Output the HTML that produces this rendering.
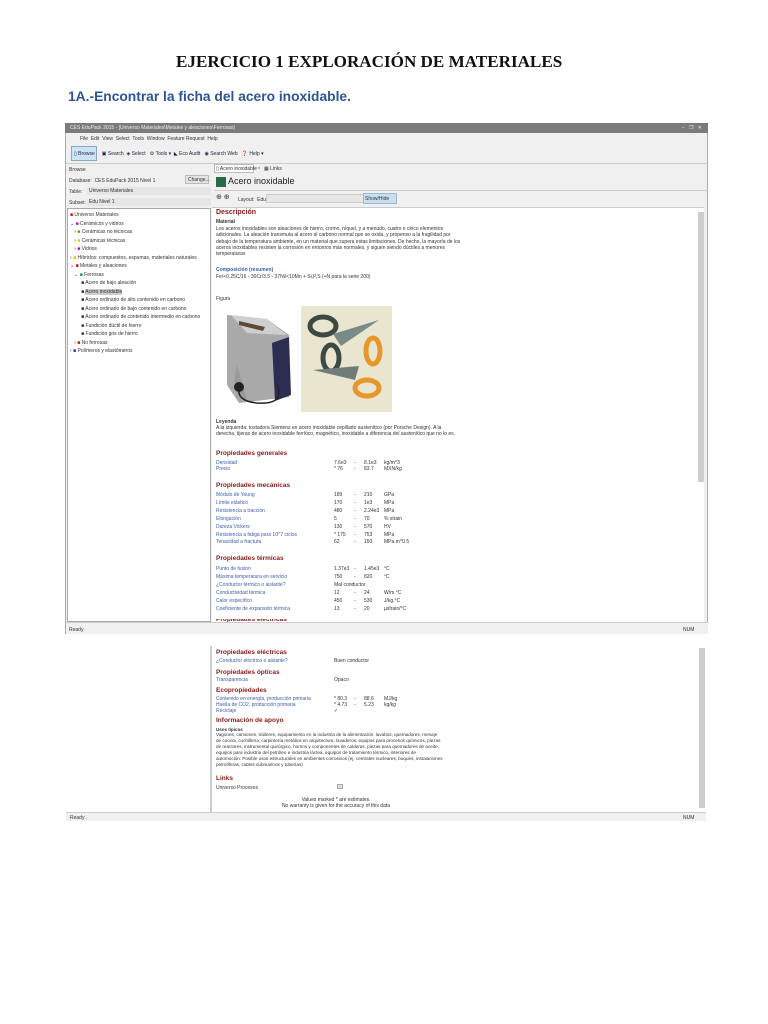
<!DOCTYPE html>
<html><head><meta charset="utf-8"><style>
*{margin:0;padding:0;box-sizing:border-box}
body{width:768px;height:1024px;background:#fff;position:relative;overflow:hidden;font-family:"Liberation Sans",sans-serif;color:#333}
.a{position:absolute}
.t{font-size:5px;line-height:6px;white-space:nowrap}
.h{color:#8b1a1a;font-weight:bold;font-size:6.5px}
.l{color:#3b5ea8}
</style></head><body>
<div class="a" style="left:176px;top:52px;font-family:'Liberation Serif',serif;font-weight:bold;font-size:17.1px;color:#111">EJERCICIO 1 EXPLORACIÓN DE MATERIALES</div>
<div class="a" style="left:68px;top:89px;font-weight:bold;font-size:13.8px;color:#2e5597">1A.-Encontrar la ficha del acero inoxidable.</div>

<!-- window 1 -->
<div class="a" style="left:65px;top:123px;width:643px;height:511px;background:#f0f0f0;border:1px solid #aaa"></div>
<div class="a" style="left:65px;top:123px;width:643px;height:10px;background:#7b7b7b"></div>
<div class="a t" style="left:70px;top:125px;color:#eee">CES EduPack 2015 - [Universo Materiales\Metales y aleaciones\Ferrosas]</div>
<div class="a t" style="left:682px;top:125px;color:#eee">–&nbsp;&nbsp;&nbsp;❐&nbsp;&nbsp;&nbsp;✕</div>
<div class="a t" style="left:80px;top:136px">File&nbsp; Edit&nbsp; View&nbsp; Select&nbsp; Tools&nbsp; Window&nbsp; Feature Request&nbsp; Help</div>
<div class="a" style="left:71px;top:146px;width:26px;height:15px;background:#cde4f7;border:1px solid #8ab"></div>
<div class="a t" style="left:74px;top:151px;color:#224">▯ Browse&nbsp;&nbsp;&nbsp;&nbsp; ▣ Search&nbsp; ◈ Select&nbsp;&nbsp; ⚙ Tools ▾&nbsp; ◣ Eco Audit&nbsp;&nbsp; ◉ Search Web&nbsp;&nbsp; ❓ Help ▾</div>
<div class="a" style="left:66px;top:163px;width:642px;height:1px;background:#ccc"></div>
<!-- left pane -->
<div class="a t" style="left:69px;top:167px">Browse</div>
<div class="a t" style="left:69px;top:178px">Database:&nbsp; CES EduPack 2015 Nivel 1</div>
<div class="a" style="left:185px;top:175px;width:24px;height:9px;background:#e4e4e4;border:1px solid #bbb"></div>
<div class="a t" style="left:188px;top:177px">Change...</div>
<div class="a t" style="left:69px;top:189px">Table:</div>
<div class="a" style="left:87px;top:187px;width:124px;height:8px;background:#e6e6e6"></div>
<div class="a t" style="left:89px;top:188px">Universo Materiales</div>
<div class="a t" style="left:69px;top:200px">Subset:</div>
<div class="a" style="left:87px;top:198px;width:124px;height:8px;background:#e6e6e6"></div>
<div class="a t" style="left:89px;top:199px">Edu Nivel 1</div>
<div class="a" style="left:67px;top:208px;width:144px;height:414px;background:#fff;border:1px solid #aaa"></div>
<div class="a t" style="left:70px;top:211px;line-height:8.5px;color:#333">
<span style="color:#c00">■</span> Universo Materiales<br>
⌄ <span style="color:#c0c">■</span> Cerámicos y vidrios<br>
&nbsp;&nbsp;&nbsp;› <span style="color:#880">■</span> Cerámicas no técnicas<br>
&nbsp;&nbsp;&nbsp;› <span style="color:#dc0">■</span> Cerámicas técnicas<br>
&nbsp;&nbsp;&nbsp;› <span style="color:#c0c">■</span> Vidrios<br>
› <span style="color:#dc0">■</span> Híbridos: compuestos, espumas, materiales naturales<br>
⌄ <span style="color:#c00">■</span> Metales y aleaciones<br>
&nbsp;&nbsp;&nbsp;⌄ <span style="color:#088">■</span> Ferrosas<br>
&nbsp;&nbsp;&nbsp;&nbsp;&nbsp;&nbsp;&nbsp;&nbsp;<span style="color:#233">■</span> Acero de bajo aleación<br>
&nbsp;&nbsp;&nbsp;&nbsp;&nbsp;&nbsp;&nbsp;&nbsp;<span style="color:#233">■</span> <span style="background:#ccc">Acero inoxidable</span><br>
&nbsp;&nbsp;&nbsp;&nbsp;&nbsp;&nbsp;&nbsp;&nbsp;<span style="color:#233">■</span> Acero ordinario de alto contenido en carbono<br>
&nbsp;&nbsp;&nbsp;&nbsp;&nbsp;&nbsp;&nbsp;&nbsp;<span style="color:#233">■</span> Acero ordinario de bajo contenido en carbono<br>
&nbsp;&nbsp;&nbsp;&nbsp;&nbsp;&nbsp;&nbsp;&nbsp;<span style="color:#233">■</span> Acero ordinario de contenido intermedio en carbono<br>
&nbsp;&nbsp;&nbsp;&nbsp;&nbsp;&nbsp;&nbsp;&nbsp;<span style="color:#233">■</span> Fundición dúctil de hierro<br>
&nbsp;&nbsp;&nbsp;&nbsp;&nbsp;&nbsp;&nbsp;&nbsp;<span style="color:#233">■</span> Fundición gris de hierro<br>
&nbsp;&nbsp;&nbsp;› <span style="color:#c00">■</span> No ferrosas<br>
› <span style="color:#22c">■</span> Polímeros y elastómeros</div>
<!-- right pane -->
<div class="a" style="left:214px;top:164px;width:40px;height:9px;background:#fff;border:1px solid #bbb"></div>
<div class="a t" style="left:216px;top:166px">▯ Acero inoxidable ˣ&nbsp;&nbsp; ▦ Links</div>
<div class="a" style="left:216px;top:177px;width:10px;height:10px;background:#2a6a4a"></div>
<div class="a" style="left:228px;top:176px;font-size:9px;color:#222">Acero inoxidable</div>
<div class="a" style="left:214px;top:190px;width:494px;height:1px;background:#ccc"></div>
<div class="a t" style="left:216px;top:195px;font-size:7px">⊕ ⊕</div>
<div class="a t" style="left:238px;top:197px">Layout:&nbsp; Edu Nivel 1</div>
<div class="a" style="left:266px;top:194px;width:98px;height:9px;background:#e6e6e6;border:1px solid #ccc"></div>
<div class="a" style="left:363px;top:193px;width:34px;height:11px;background:#c8dff3;border:1px solid #9bc"></div>
<div class="a t" style="left:365px;top:196px">Show/Hide</div>
<div class="a" style="left:212px;top:207px;width:492px;height:415px;background:#fff;border-top:1px solid #ccc"></div>
<div class="a" style="left:698px;top:212px;width:6px;height:270px;background:#cdcdcd"></div>
<div class="a t" style="left:216px;top:210px"><span class="h" style="font-size:7px">Descripción</span></div>
<div class="a t" style="left:216px;top:219px;font-weight:bold">Material</div>
<div class="a t" style="left:216px;top:226px;line-height:6.3px">Los aceros inoxidables son aleaciones de hierro, cromo, níquel, y a menudo, cuatro o cinco elementos<br>adicionales. La aleación transmuta al acero al carbono normal que se oxida, y propenso a la fragilidad por<br>debajo de la temperatura ambiente, en un material que supera estas limitaciones. De hecho, la mayoría de los<br>aceros inoxidables resisten la corrosión en entornos más normales, y siguen siendo dúctiles a menores<br>temperaturas</div>
<div class="a t l" style="left:216px;top:267px;font-weight:bold">Composición (resumen)</div>
<div class="a t" style="left:216px;top:274px">Fe/&lt;0.25C/16 - 30Cr/3.5 - 37Ni/&lt;10Mn + Si,P,S (+N para la serie 200)</div>
<div class="a t" style="left:216px;top:296px">Figura</div>
<!-- toaster -->
<svg class="a" style="left:217px;top:305px" width="80" height="106" viewBox="0 0 80 106">
<rect width="80" height="106" fill="#fff"/>
<path d="M10 10 L50 14 L72 30 L72 92 L22 98 L10 80 Z" fill="#a9a9a9"/>
<path d="M14 10 L50 14 L70 30 L30 28 Z" fill="#cfcfcf"/>
<path d="M22 16 L48 22 L46 26 L22 20 Z" fill="#5a4a3a"/>
<path d="M55 38 L72 32 L74 90 L58 96 Z" fill="#2b2e50"/>
<path d="M20 60 Q12 90 30 95" fill="#9a9a9a"/>
<path d="M60 80 Q68 100 40 98 Q20 96 22 84" stroke="#222" stroke-width="1.5" fill="none"/>
<circle cx="22" cy="82" r="5" fill="#222"/>
</svg>
<!-- scissors -->
<svg class="a" style="left:301px;top:306px" width="91" height="106" viewBox="0 0 91 106">
<rect width="91" height="106" fill="#e9e5cf"/>
<ellipse cx="22" cy="20" rx="13" ry="9" fill="none" stroke="#3c4a44" stroke-width="5"/>
<ellipse cx="30" cy="52" rx="8" ry="13" fill="none" stroke="#3c4a44" stroke-width="5"/>
<path d="M32 28 L78 14 L40 40 Z" fill="#7a8a86"/>
<ellipse cx="72" cy="45" rx="7" ry="13" fill="none" stroke="#e7962a" stroke-width="5"/>
<ellipse cx="66" cy="82" rx="12" ry="8" fill="none" stroke="#e7962a" stroke-width="5"/>
<path d="M58 60 L12 64 L54 74 Z" fill="#6f7c78"/>
</svg>
<div class="a t" style="left:216px;top:419px;font-weight:bold">Leyenda</div>
<div class="a t" style="left:216px;top:425px;line-height:6.3px">A la izquierda: tostadora Siemens en acero inoxidable cepillado austenítico (por Porsche Design). A la<br>derecha, tijeras de acero inoxidable ferrítico, magnético, inoxidable a diferencia del austenítico que no lo es.</div>

<div class="a t" style="left:216px;top:451px"><span class="h">Propiedades generales</span></div>
<div class="a t" style="left:216px;top:460px;line-height:6.3px">
<div><span class="l" style="display:inline-block;width:118px">Densidad</span><span style="display:inline-block;width:20px">7.6e3</span><span style="display:inline-block;width:10px">-</span><span style="display:inline-block;width:20px">8.1e3</span>kg/m^3</div>
<div><span class="l" style="display:inline-block;width:118px">Precio</span><span style="display:inline-block;width:20px">* 76</span><span style="display:inline-block;width:10px">-</span><span style="display:inline-block;width:20px">83.7</span>MXN/kg</div></div>
<div class="a t" style="left:216px;top:483px"><span class="h">Propiedades mecánicas</span></div>
<div class="a t" style="left:216px;top:492px;line-height:7.9px">
<div><span class="l" style="display:inline-block;width:118px">Módulo de Young</span><span style="display:inline-block;width:20px">189</span><span style="display:inline-block;width:10px">-</span><span style="display:inline-block;width:20px">210</span>GPa</div>
<div><span class="l" style="display:inline-block;width:118px">Límite elástico</span><span style="display:inline-block;width:20px">170</span><span style="display:inline-block;width:10px">-</span><span style="display:inline-block;width:20px">1e3</span>MPa</div>
<div><span class="l" style="display:inline-block;width:118px">Resistencia a tracción</span><span style="display:inline-block;width:20px">480</span><span style="display:inline-block;width:10px">-</span><span style="display:inline-block;width:20px">2.24e3</span>MPa</div>
<div><span class="l" style="display:inline-block;width:118px">Elongación</span><span style="display:inline-block;width:20px">5</span><span style="display:inline-block;width:10px">-</span><span style="display:inline-block;width:20px">70</span>% strain</div>
<div><span class="l" style="display:inline-block;width:118px">Dureza Vickers</span><span style="display:inline-block;width:20px">130</span><span style="display:inline-block;width:10px">-</span><span style="display:inline-block;width:20px">570</span>HV</div>
<div><span class="l" style="display:inline-block;width:118px">Resistencia a fatiga para 10^7 ciclos</span><span style="display:inline-block;width:20px">* 175</span><span style="display:inline-block;width:10px">-</span><span style="display:inline-block;width:20px">753</span>MPa</div>
<div><span class="l" style="display:inline-block;width:118px">Tenacidad a fractura</span><span style="display:inline-block;width:20px">62</span><span style="display:inline-block;width:10px">-</span><span style="display:inline-block;width:20px">150</span>MPa.m^0.5</div></div>
<div class="a t" style="left:216px;top:556px"><span class="h">Propiedades térmicas</span></div>
<div class="a t" style="left:216px;top:566px;line-height:7.9px">
<div><span class="l" style="display:inline-block;width:118px">Punto de fusión</span><span style="display:inline-block;width:20px">1.37e3</span><span style="display:inline-block;width:10px">-</span><span style="display:inline-block;width:20px">1.45e3</span>°C</div>
<div><span class="l" style="display:inline-block;width:118px">Máxima temperatura en servicio</span><span style="display:inline-block;width:20px">750</span><span style="display:inline-block;width:10px">-</span><span style="display:inline-block;width:20px">820</span>°C</div>
<div><span class="l" style="display:inline-block;width:118px">¿Conductor térmico o aislante?</span>Mal conductor</div>
<div><span class="l" style="display:inline-block;width:118px">Conductividad térmica</span><span style="display:inline-block;width:20px">12</span><span style="display:inline-block;width:10px">-</span><span style="display:inline-block;width:20px">24</span>W/m.°C</div>
<div><span class="l" style="display:inline-block;width:118px">Calor específico</span><span style="display:inline-block;width:20px">450</span><span style="display:inline-block;width:10px">-</span><span style="display:inline-block;width:20px">530</span>J/kg.°C</div>
<div><span class="l" style="display:inline-block;width:118px">Coeficiente de expansión térmica</span><span style="display:inline-block;width:20px">13</span><span style="display:inline-block;width:10px">-</span><span style="display:inline-block;width:20px">20</span>µstrain/°C</div></div>
<div class="a" style="left:216px;top:619px;width:80px;height:3px;overflow:hidden"><div class="t h" style="margin-top:-2px">Propiedades eléctricas</div></div>
<div class="a" style="left:66px;top:622px;width:642px;height:12px;background:#f0f0f0;border-top:1px solid #ccc"></div>
<div class="a t" style="left:69px;top:627px">Ready</div>
<div class="a t" style="left:683px;top:627px">NUM</div>

<!-- window 2 -->
<div class="a" style="left:210px;top:646px;width:2px;height:166px;background:#ccc"></div>
<div class="a" style="left:699px;top:648px;width:6px;height:160px;background:#cdcdcd"></div>
<div class="a t" style="left:216px;top:650px"><span class="h">Propiedades eléctricas</span></div>
<div class="a t" style="left:216px;top:658px"><span class="l" style="display:inline-block;width:118px">¿Conductor eléctrico o aislante?</span>Buen conductor</div>
<div class="a t" style="left:216px;top:670px"><span class="h">Propiedades ópticas</span></div>
<div class="a t" style="left:216px;top:677px"><span class="l" style="display:inline-block;width:118px">Transparencia</span>Opaco</div>
<div class="a t" style="left:216px;top:688px"><span class="h">Ecopropiedades</span></div>
<div class="a t" style="left:216px;top:696px;line-height:6px">
<div><span class="l" style="display:inline-block;width:118px">Contenido en energía, producción primaria</span><span style="display:inline-block;width:20px">* 80.3</span><span style="display:inline-block;width:10px">-</span><span style="display:inline-block;width:20px">88.6</span>MJ/kg</div>
<div><span class="l" style="display:inline-block;width:118px">Huella de CO2, producción primaria</span><span style="display:inline-block;width:20px">* 4.73</span><span style="display:inline-block;width:10px">-</span><span style="display:inline-block;width:20px">5.23</span>kg/kg</div>
<div><span class="l" style="display:inline-block;width:118px">Reciclaje</span>✓</div></div>
<div class="a t" style="left:216px;top:718px"><span class="h">Información de apoyo</span></div>
<div class="a t" style="left:216px;top:727px;font-weight:bold;font-size:4.5px">Usos típicos</div>
<div class="a t" style="left:216px;top:732px;line-height:5.9px;font-size:4.6px">Vagones, camiones, tráileres, equipamiento en la industria de la alimentación, lavabos, quemadores, menaje<br>de cocina, cuchillería, carpintería metálica en arquitectura, lavaderos, equipos para procesos químicos, piezas<br>de reactores, instrumental quirúrgico, hornos y componentes de calderas, piezas para quemadores de aceite,<br>equipos para industria del petróleo e industria láctea, equipos de tratamiento térmico, interiores de<br>automoción. Posible usos estructurales en ambientes corrosivos (ej. centrales nucleares, buques, instalaciones<br>petrolíferas, cables submarinos y tuberías)</div>
<div class="a t" style="left:216px;top:776px"><span class="h">Links</span></div>
<div class="a t" style="left:216px;top:785px">Universo Procesos</div>
<div class="a" style="left:337px;top:784px;width:6px;height:5px;background:#ddd;border:1px solid #aaa"></div>
<div class="a t" style="left:276px;top:797px;width:120px;text-align:center;line-height:6px">Values marked * are estimates.<br>No warranty is given for the accuracy of this data</div>
<div class="a" style="left:66px;top:812px;width:640px;height:9px;background:#f0f0f0;border-top:1px solid #ccc"></div>
<div class="a t" style="left:70px;top:815px">Ready</div>
<div class="a t" style="left:683px;top:815px">NUM</div>
</body></html>
